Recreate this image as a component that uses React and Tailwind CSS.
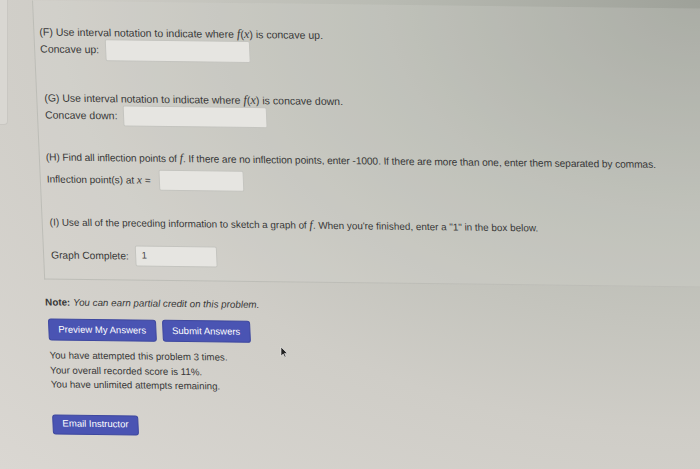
import React from "react";

const serif = "font-['Liberation_Serif',serif] italic";

function Field({ value, className }) {
  return (
    <div
      className={`rounded-[2px] border border-[#c4c4bf] bg-[#e6e5e1] px-[6px] flex items-center text-[9.5px] text-[#444] ${className}`}
    >
      {value}
    </div>
  );
}

function Btn({ children, className }) {
  return (
    <div
      className={`rounded-[3px] bg-[#4a54b3] border border-[#3d479f] px-[9px] flex items-center text-[9.5px] text-white ${className}`}
    >
      {children}
    </div>
  );
}

export default function App() {
  return (
    <div className="relative w-[700px] h-[469px] overflow-hidden bg-[radial-gradient(ellipse_at_100%_0%,#9ea199_0%,#b9bbb3_32%,#cfcdc7_65%,#dad7d2_100%)] font-['Liberation_Sans',Arial,sans-serif] text-[#383838]">
      <div className="absolute left-0 top-0 h-[125px] w-[8px] rounded-br-[4px] bg-[#d9d7d2] border-r border-b border-[#c9c7c2]" />

      <div className="origin-top-left skew-x-[2.5deg] skew-y-[0.7deg] pl-[32px]">
        {/* problem well */}
        <div className="w-[720px] h-[279px] border-l border-b border-[#bdbdb7] bg-[#dcdbd6]/20 pl-[5px] pt-[24px]">
          <div className="text-[10.5px] leading-[14px]">
            (F) Use interval notation to indicate where{" "}
            <span className={`${serif} text-[12.5px]`}>f</span>(
            <span className={`${serif} text-[12.5px]`}>x</span>) is concave up.
          </div>
          <div className="flex items-center gap-[6px] text-[10.5px]">
            <span>Concave up:</span>
            <Field className="w-[145px] h-[22px]" />
          </div>

          <div className="text-[10.5px] leading-[14px] mt-[30px] ml-[2px]">
            (G) Use interval notation to indicate where{" "}
            <span className={`${serif} text-[12.5px]`}>f</span>(
            <span className={`${serif} text-[12.5px]`}>x</span>) is concave down.
          </div>
          <div className="flex items-center gap-[6px] ml-[2px] text-[10.5px]">
            <span>Concave down:</span>
            <Field className="w-[144px] h-[21px]" />
          </div>

          <div className="text-[10.2px] leading-[14px] mt-[24px] ml-[1px] tracking-[-0.1px]">
            (H) Find all inflection points of{" "}
            <span className={`${serif} text-[12px]`}>f</span>. If there are no inflection points, enter -1000. If there are more than one, enter them separated by commas.
          </div>
          <div className="flex items-center gap-[8px] mt-[4px] ml-[1px] text-[10px]">
            <span>
              Inflection point(s) at <span className={`${serif} text-[11.5px]`}>x</span> =
            </span>
            <Field className="w-[85px] h-[21px]" />
          </div>

          <div className="text-[9.9px] leading-[14px] mt-[25px] ml-[2px]">
            (I) Use all of the preceding information to sketch a graph of{" "}
            <span className={`${serif} text-[12px]`}>f</span>. When you're finished, enter a "1" in the box below.
          </div>
          <div className="flex items-center gap-[6px] mt-[15px] ml-[2px] text-[10.2px]">
            <span>Graph Complete:</span>
            <Field value="1" className="w-[82px] h-[21px]" />
          </div>
        </div>

        {/* below the well */}
        <div className="pt-[16px]">
          <div className="text-[9.8px] leading-[14px]">
            <span className="font-bold">Note:</span>{" "}
            <span className="italic">You can earn partial credit on this problem.</span>
          </div>
          <div className="flex gap-[6px] mt-[9px] ml-[2px]">
            <Btn className="h-[22px]">Preview My Answers</Btn>
            <Btn className="h-[22px]">Submit Answers</Btn>
          </div>
          <div className="mt-[8px] ml-[2px] text-[9.7px] leading-[14.5px]">
            <div>You have attempted this problem 3 times.</div>
            <div>Your overall recorded score is 11%.</div>
            <div>You have unlimited attempts remaining.</div>
          </div>
          <div className="mt-[22px] ml-[2px] flex">
            <Btn className="h-[20px] px-[8px]">Email Instructor</Btn>
          </div>
        </div>
      </div>

      {/* mouse pointer */}
      <svg className="absolute left-[280px] top-[346px]" width="8" height="12" viewBox="0 0 8 12">
        <path d="M1 1 L1 10 L3.2 8 L4.8 11.2 L6 10.6 L4.5 7.4 L7.4 7.4 Z" fill="#222" stroke="#eee" strokeWidth="0.6" />
      </svg>
    </div>
  );
}
